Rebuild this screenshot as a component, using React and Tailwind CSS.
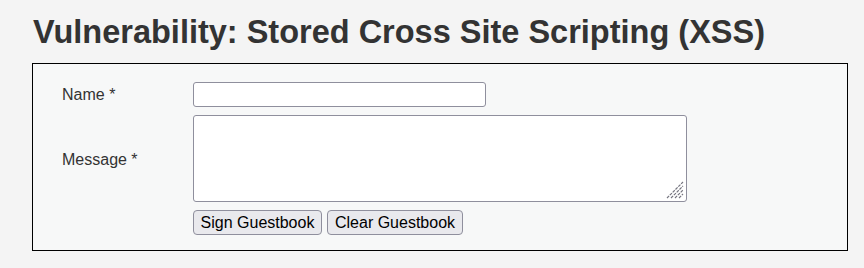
import React from 'react'

function Grip() {
    return (
        <svg className="absolute right-[3px] bottom-[3px] pointer-events-none" width="18" height="18" viewBox="0 0 18 18">
            <g stroke="#75757f" strokeWidth="1.2" strokeDasharray="3 1">
                <line x1="1" y1="17" x2="17" y2="1" />
                <line x1="5" y1="17" x2="17" y2="5" />
                <line x1="9" y1="17" x2="17" y2="9" />
                <line x1="13" y1="17" x2="17" y2="13" />
            </g>
        </svg>
    )
}

export default function App() {
    const btn = "h-[25px] px-[6px] bg-[#e9e9ed] border border-[#8f8f9d] rounded-[4px] text-[16px] text-black leading-none"

    return (
        <div className="min-h-screen bg-[#f4f4f4] font-['Liberation_Sans',Arial,sans-serif] text-[#333] pl-[32px] pr-[16px] pt-[14px]">
            <h1 className="text-[32.5px] font-bold h-[37px] leading-[37px] ml-[1px] mb-[12px]">
                Vulnerability: Stored Cross Site Scripting (XSS)
            </h1>

            <div className="w-[816px] border border-black bg-[#f7f8f8] pt-[17px] pb-[15px] pl-[29px]">
                <div className="grid grid-cols-[131px_auto] gap-y-[8px] items-center text-[16px]">
                    <div className="pt-[2px]">Name *</div>
                    <div>
                        <input className="block w-[293px] h-[25px] bg-white border border-[#8f8f9d] rounded-[3px] px-1" />
                    </div>

                    <div className="pt-[2px]">Message *</div>
                    <div className="relative w-[494px]">
                        <textarea className="block w-[494px] h-[87px] bg-white border border-[#8f8f9d] rounded-[3px] resize-none" />
                        <Grip />
                    </div>

                    <div></div>
                    <div className="flex gap-[5px]">
                        <button className={btn + " w-[129px]"}>Sign Guestbook</button>
                        <button className={btn + " w-[136px]"}>Clear Guestbook</button>
                    </div>
                </div>
            </div>
        </div>
    )
}
